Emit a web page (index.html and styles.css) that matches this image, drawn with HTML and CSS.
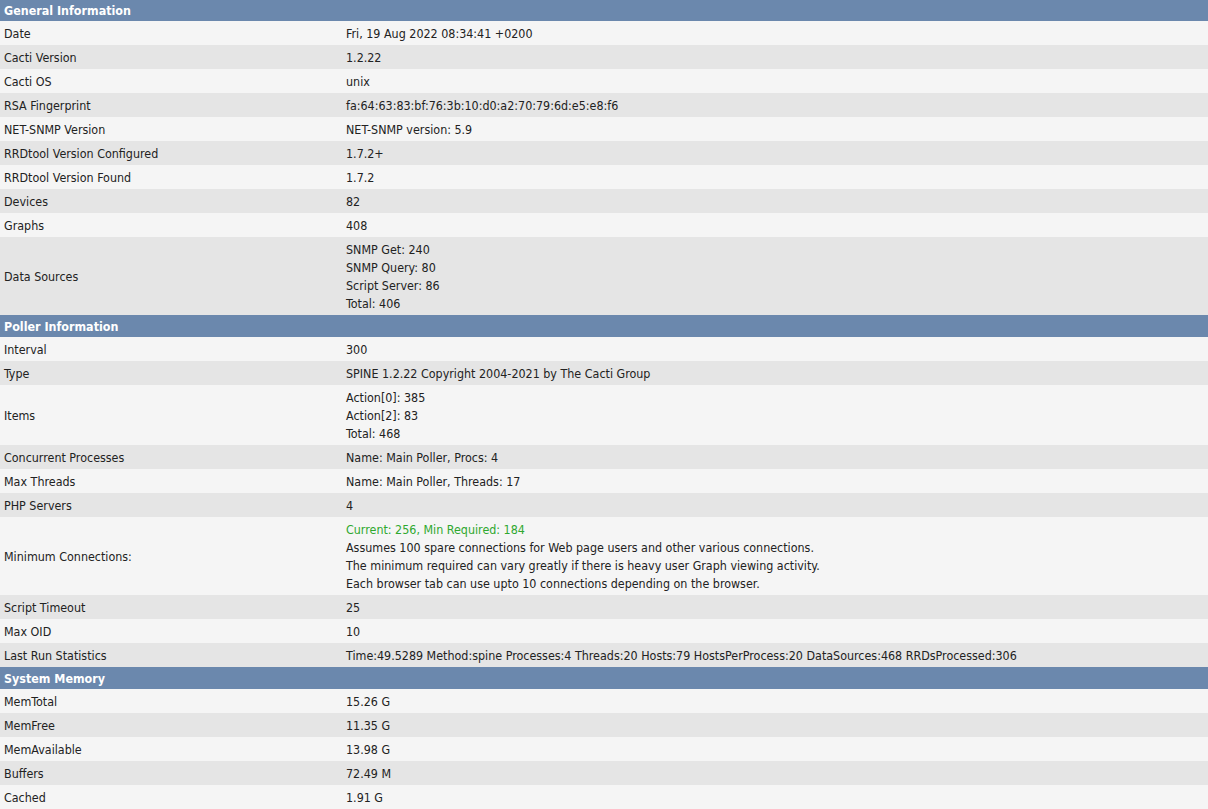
FILE: index.html
```html
<!DOCTYPE html>
<html>
<head>
<meta charset="utf-8">
<link rel="stylesheet" href="styles.css">
</head>
<body>
<table class="info">
<tbody>
<tr class="hdr"><th colspan="2">General Information</th></tr>
<tr class="odd"><td class="lbl">Date</td><td>Fri, 19 Aug 2022 08:34:41 +0200</td></tr>
<tr class="even"><td class="lbl">Cacti Version</td><td>1.2.22</td></tr>
<tr class="odd"><td class="lbl">Cacti OS</td><td>unix</td></tr>
<tr class="even"><td class="lbl">RSA Fingerprint</td><td>fa:64:63:83:bf:76:3b:10:d0:a2:70:79:6d:e5:e8:f6</td></tr>
<tr class="odd"><td class="lbl">NET-SNMP Version</td><td>NET-SNMP version: 5.9</td></tr>
<tr class="even"><td class="lbl">RRDtool Version Configured</td><td>1.7.2+</td></tr>
<tr class="odd"><td class="lbl">RRDtool Version Found</td><td>1.7.2</td></tr>
<tr class="even"><td class="lbl">Devices</td><td>82</td></tr>
<tr class="odd"><td class="lbl">Graphs</td><td>408</td></tr>
<tr class="even"><td class="lbl">Data Sources</td><td>SNMP Get: 240<br>SNMP Query: 80<br>Script Server: 86<br>Total: 406</td></tr>
<tr class="hdr"><th colspan="2">Poller Information</th></tr>
<tr class="odd"><td class="lbl">Interval</td><td>300</td></tr>
<tr class="even"><td class="lbl">Type</td><td>SPINE 1.2.22 Copyright 2004-2021 by The Cacti Group</td></tr>
<tr class="odd"><td class="lbl">Items</td><td>Action[0]: 385<br>Action[2]: 83<br>Total: 468</td></tr>
<tr class="even"><td class="lbl">Concurrent Processes</td><td>Name: Main Poller, Procs: 4</td></tr>
<tr class="odd"><td class="lbl">Max Threads</td><td>Name: Main Poller, Threads: 17</td></tr>
<tr class="even"><td class="lbl">PHP Servers</td><td>4</td></tr>
<tr class="odd"><td class="lbl">Minimum Connections:</td><td><span class="ok">Current: 256, Min Required: 184</span><br>Assumes 100 spare connections for Web page users and other various connections.<br>The minimum required can vary greatly if there is heavy user Graph viewing activity.<br>Each browser tab can use upto 10 connections depending on the browser.</td></tr>
<tr class="even"><td class="lbl">Script Timeout</td><td>25</td></tr>
<tr class="odd"><td class="lbl">Max OID</td><td>10</td></tr>
<tr class="even"><td class="lbl">Last Run Statistics</td><td>Time:49.5289 Method:spine Processes:4 Threads:20 Hosts:79 HostsPerProcess:20 DataSources:468 RRDsProcessed:306</td></tr>
<tr class="hdr"><th colspan="2">System Memory</th></tr>
<tr class="odd"><td class="lbl">MemTotal</td><td>15.26 G</td></tr>
<tr class="even"><td class="lbl">MemFree</td><td>11.35 G</td></tr>
<tr class="odd"><td class="lbl">MemAvailable</td><td>13.98 G</td></tr>
<tr class="even"><td class="lbl">Buffers</td><td>72.49 M</td></tr>
<tr class="odd"><td class="lbl">Cached</td><td>1.91 G</td></tr>
</tbody>
</table>
</body>
</html>
```
FILE: styles.css
```css
html, body {
  margin: 0;
  padding: 0;
  background: #ffffff;
}
body {
  font-family: "DejaVu Sans Condensed", "DejaVu Sans", sans-serif;
  font-size: 12.4px;
  color: #222222;
}
.info {
  width: 100%;
  border-collapse: collapse;
  border-spacing: 0;
  margin-top: -1px;
}
.info td, .info th {
  padding: 4px 4px 2px;
  height: 18px;
  line-height: 18px;
  vertical-align: middle;
  text-align: left;
  white-space: nowrap;
}
.info .lbl {
  width: 334px;
}
.hdr th {
  background: #6b88ad;
  color: #ffffff;
  font-weight: bold;
  padding: 3px 4px 1px;
}
.odd td {
  background: #f5f5f5;
}
.even td {
  background: #e5e5e5;
}
.ok {
  color: #2fa82f;
}
```
